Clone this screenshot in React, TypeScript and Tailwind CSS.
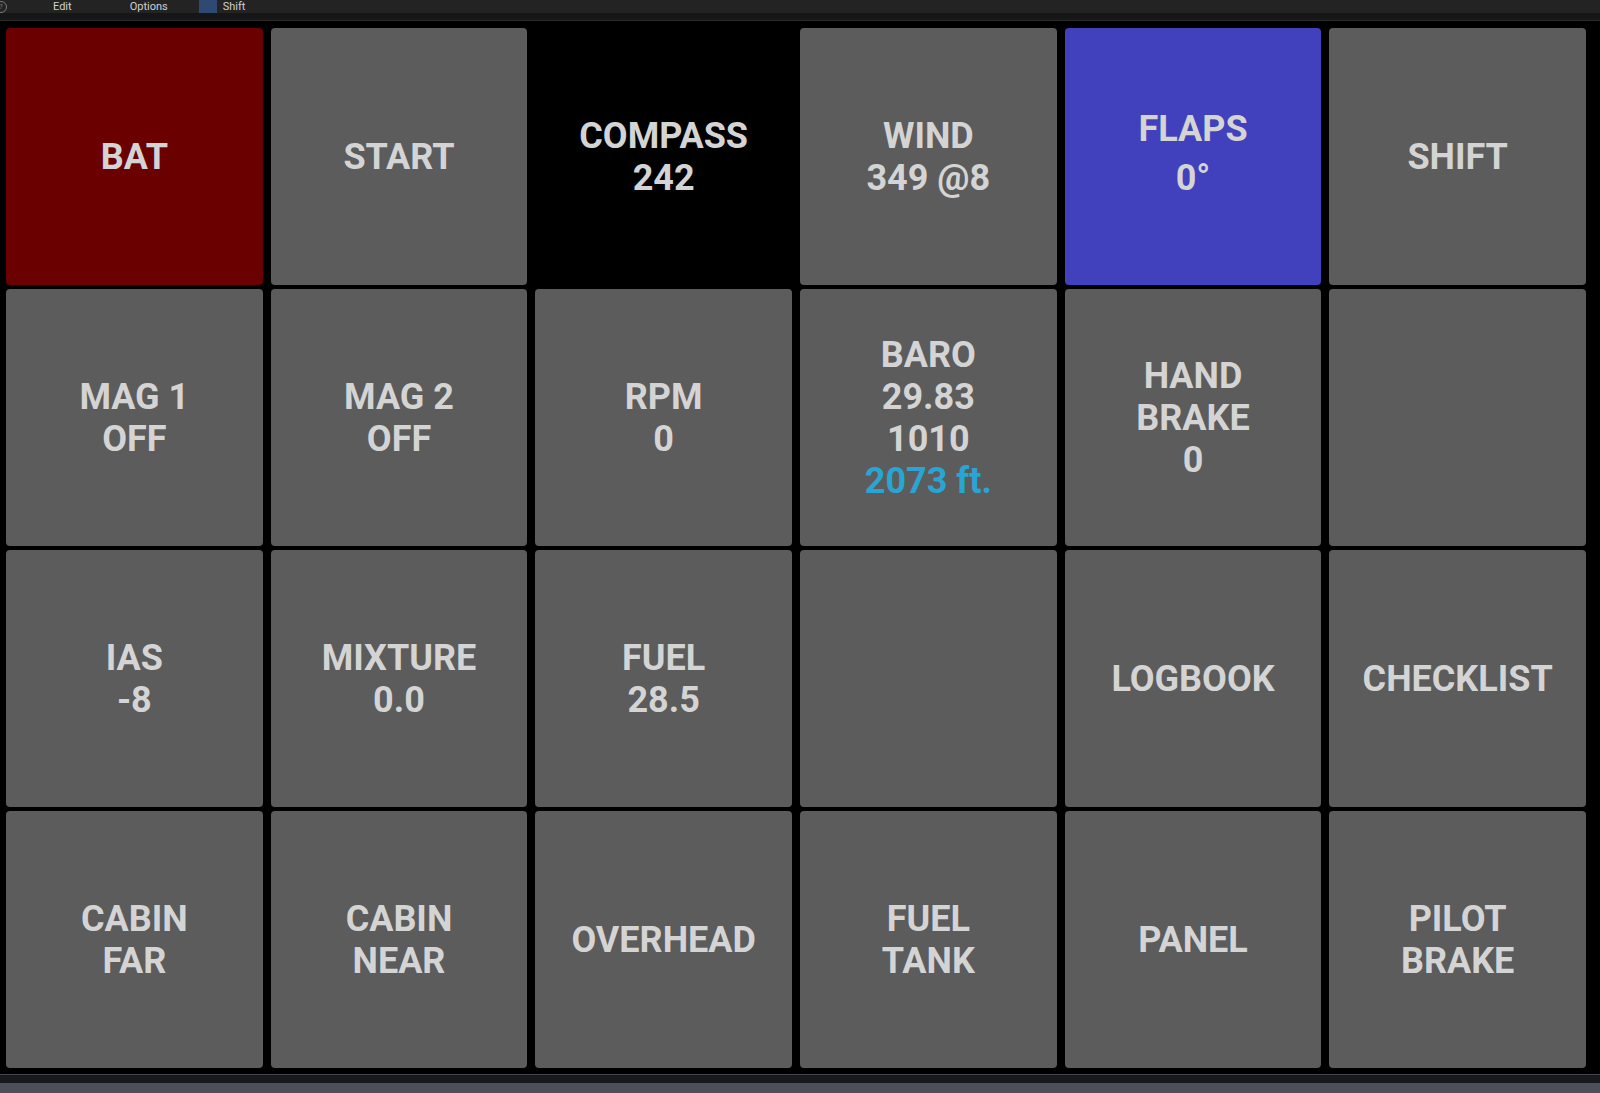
import React from "react";

type Tile = {
  lines: string[];
  bg?: string;
  extra?: string;
  wide?: boolean;
};

const tiles: Tile[] = [
  { lines: ["BAT"], bg: "bg-[#6b0000]" },
  { lines: ["START"] },
  { lines: ["COMPASS", "242"], bg: "bg-black" },
  { lines: ["WIND", "349 @8"] },
  { lines: ["FLAPS", "0°"], bg: "bg-[#4141bd]", wide: true },
  { lines: ["SHIFT"] },

  { lines: ["MAG 1", "OFF"] },
  { lines: ["MAG 2", "OFF"] },
  { lines: ["RPM", "0"] },
  { lines: ["BARO", "29.83", "1010"], extra: "2073 ft." },
  { lines: ["HAND", "BRAKE", "0"] },
  { lines: [] },

  { lines: ["IAS", "-8"] },
  { lines: ["MIXTURE", "0.0"] },
  { lines: ["FUEL", "28.5"] },
  { lines: [] },
  { lines: ["LOGBOOK"] },
  { lines: ["CHECKLIST"] },

  { lines: ["CABIN", "FAR"] },
  { lines: ["CABIN", "NEAR"] },
  { lines: ["OVERHEAD"] },
  { lines: ["FUEL", "TANK"] },
  { lines: ["PANEL"] },
  { lines: ["PILOT", "BRAKE"] },
];

function Key({ tile }: { tile: Tile }) {
  return (
    <div
      className={`${tile.bg ?? "bg-[#5c5c5c]"} ${tile.wide ? "gap-[7px] pb-[7px]" : ""} rounded-[4px] flex flex-col items-center justify-center text-[36px] leading-[42px] font-bold text-[#d4d4d4]`}
    >
      {tile.lines.map((l) => (
        <span key={l}>{l}</span>
      ))}
      {tile.extra && <span className="text-[#2aa4d3]">{tile.extra}</span>}
    </div>
  );
}

export default function App() {
  return (
    <div
      className="h-[1093px] w-[1600px] flex flex-col bg-black overflow-hidden"
      style={{ fontFamily: "Roboto, 'Noto Sans', sans-serif" }}
    >
      {/* menu strip, mostly scrolled off the top */}
      <div className="h-[13px] bg-[#232323] flex items-end text-[11px] leading-[13px] text-[#d0d0d0] overflow-hidden">
        <span className="-ml-[5px] w-[12px] h-[12px] rounded-full border border-[#7a7a7a] text-[8px] leading-[10px] text-center text-[#7a7a7a]">
          ?
        </span>
        <span className="ml-[46px]">Edit</span>
        <span className="ml-[58px]">Options</span>
        <span className="ml-[31px] w-[18px] h-[13px] bg-[#2f4a72]" />
        <span className="ml-[6px]">Shift</span>
      </div>
      <div className="h-[7px] bg-[#161616]" />
      <div className="h-px bg-[#2c2c2c]" />

      <div className="pt-[7px] pl-[6px] pr-[14px] grid grid-cols-6 grid-rows-[repeat(4,257px)] gap-x-[8px] gap-y-[4px]">
        {tiles.map((t, i) => (
          <Key key={i} tile={t} />
        ))}
      </div>

      <div className="h-[6px]" />
      <div className="h-px bg-[#45454b]" />
      <div className="h-[8px] bg-[#17191c]" />
      <div className="flex-1 bg-[#4b505a]" />
    </div>
  );
}
